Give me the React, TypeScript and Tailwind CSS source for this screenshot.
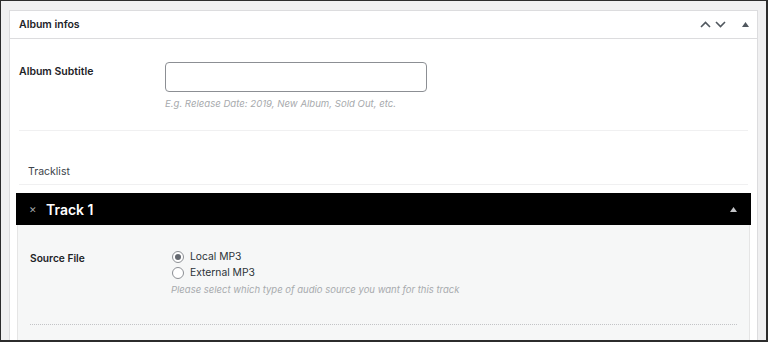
import React from "react";

const font = { fontFamily: "Inter, 'Liberation Sans', Arial, sans-serif" };

function ChevronUp() {
  return (
    <svg width="11" height="7" viewBox="0 0 11 7" fill="none">
      <path d="M1 6 L5.5 1.5 L10 6" stroke="#50575e" strokeWidth="1.6" />
    </svg>
  );
}
function ChevronDown() {
  return (
    <svg width="11" height="7" viewBox="0 0 11 7" fill="none">
      <path d="M1 1 L5.5 5.5 L10 1" stroke="#50575e" strokeWidth="1.6" />
    </svg>
  );
}
function Tri({ color }: { color: string }) {
  return (
    <svg width="7" height="5" viewBox="0 0 7 5">
      <path d="M0 5 L3.5 0 L7 5 Z" fill={color} />
    </svg>
  );
}

function Radio({ checked }: { checked?: boolean }) {
  return (
    <span className="flex h-[12px] w-[12px] items-center justify-center rounded-full border border-[#8c8f94] bg-white">
      {checked && <span className="h-[6px] w-[6px] rounded-full bg-[#646970]" />}
    </span>
  );
}

export default function App() {
  return (
    <div
      className="h-[342px] w-[768px] overflow-hidden border-t border-l border-r-2 border-b-2 border-[#2c2c2c] bg-[#f0f0f1] pl-[8px] pr-[8px] pt-[9px]"
      style={font}
    >
      <div className="h-[340px] border border-[#dcdcde] bg-white">
        {/* header */}
        <div className="flex h-[28px] items-center justify-between border-b border-[#dcdcde] pl-[9px] pr-[8px]">
          <span className="pt-[1px] text-[10.5px] font-semibold text-[#1d2327]">Album infos</span>
          <div className="flex items-center">
            <span className="mr-[4px]"><ChevronUp /></span>
            <span className="mr-[16px]"><ChevronDown /></span>
            <Tri color="#50575e" />
          </div>
        </div>

        <div className="px-[9px]">
          {/* album subtitle row */}
          <div className="flex border-b border-[#f0f0f1] pb-[20px] pt-[23px]">
            <div className="w-[146px] pt-[3px] text-[10.5px] font-semibold leading-[14px] text-[#1d2327]">
              Album Subtitle
            </div>
            <div className="flex flex-col">
              <div className="h-[30px] w-[262px] rounded-[4px] border border-[#8c8f94] bg-white" />
              <div className="mt-[6px] text-[9.6px] italic leading-[12px] text-[#a7aaad]">
                E.g. Release Date: 2019, New Album, Sold Out, etc.
              </div>
            </div>
          </div>

          {/* tracklist */}
          <div className="border-b border-[#f0f0f1] pb-[6px] pl-[9px] pt-[34px] text-[10.5px] leading-[13px] text-[#3c434a]">
            Tracklist
          </div>

          <div className="-mx-[3px] mt-[8px]">
            <div className="flex h-[32px] items-center justify-between bg-black pl-[13px] pr-[14px]">
              <div className="flex items-center">
                <span className="mr-[9px] text-[9px] leading-none text-[#a7aaad]">✕</span>
                <span className="text-[14px] font-semibold text-white">Track 1</span>
              </div>
              <Tri color="#c3c4c7" />
            </div>
            <div className="mx-[1px] h-[130px] border-x border-[#e5e5e5] bg-[#f6f7f7] px-[12px]">
              <div className="flex pt-[24px]">
                <div className="w-[141px] pt-[2px] text-[10.2px] font-semibold leading-[14px] text-[#1d2327]">
                  Source File
                </div>
                <div className="flex flex-col">
                  <div className="flex h-[16px] items-center pl-[1px]">
                    <Radio checked />
                    <span className="ml-[6px] text-[10.3px] text-[#2c3338]">Local MP3</span>
                  </div>
                  <div className="flex h-[16px] items-center pl-[1px]">
                    <Radio />
                    <span className="ml-[6px] text-[10.3px] text-[#2c3338]">External MP3</span>
                  </div>
                  <div className="mt-[3px] text-[9.5px] italic leading-[12px] text-[#a7aaad]">
                    Please select which type of audio source you want for this track
                  </div>
                </div>
              </div>
              <div className="mt-[28px] border-b border-dotted border-[#c3c4c7]" />
            </div>
          </div>
        </div>
      </div>
    </div>
  );
}
